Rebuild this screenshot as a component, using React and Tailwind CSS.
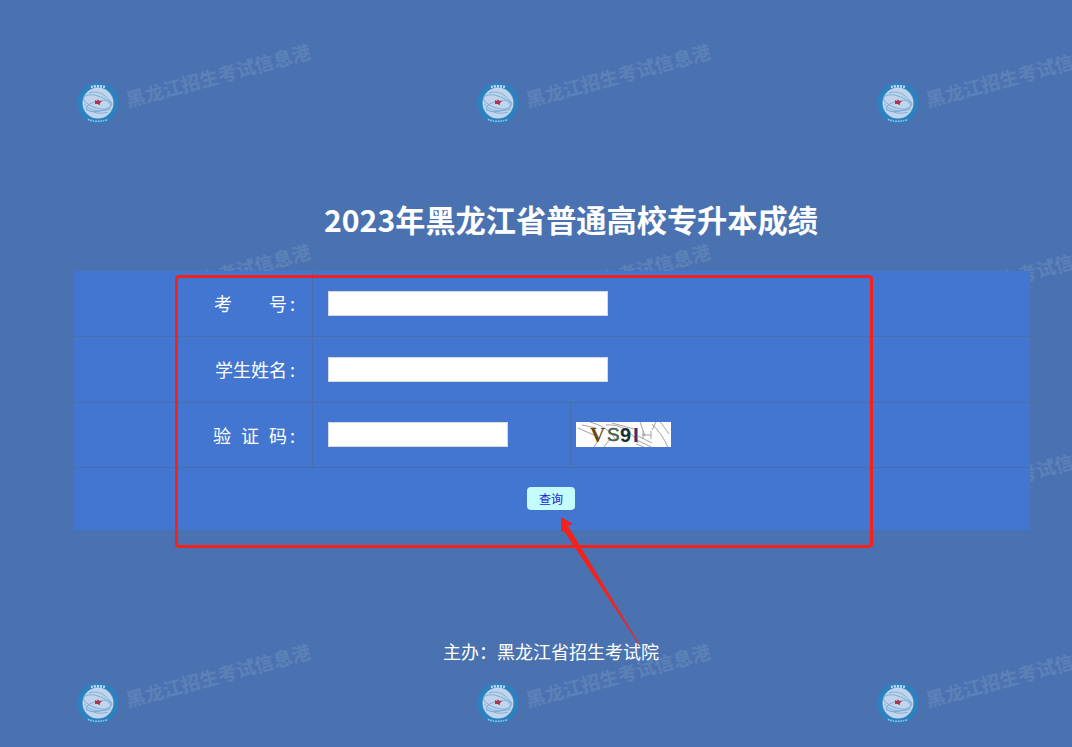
const cjk = "font-['Noto_Sans_CJK_SC','Noto_Sans',sans-serif]";

function Logo() {
  return (
    <svg width="42" height="42" viewBox="0 0 42 42" className="shrink-0">
      <circle cx="21" cy="21" r="20.5" fill="#2c81c0" />
      <circle cx="21" cy="21" r="15.5" fill="#c2d5ec" />
      <g fill="none" stroke="#7fb0dc" strokeWidth="1">
        <ellipse cx="20" cy="20" rx="14" ry="6" transform="rotate(18 20 20)" />
        <ellipse cx="22" cy="24" rx="13" ry="5" transform="rotate(-12 22 24)" />
        <path d="M7 22c5 6 14 9 27 5" />
        <path d="M12 11c8-3 17 1 22 10" />
        <path d="M9 27c6 3 14 6 22 3" />
      </g>
      <path d="M18 18l2 1 1-2 1 2 3 0-2 2 0 2-3-1-2 0z" fill="#b5324f" />
      <path d="M14 5c4-1 10-1 14 0" stroke="#c7dcef" strokeWidth="2.4" strokeDasharray="2 1" fill="none" />
      <path d="M11 37.500c6 2.400 14 2.400 20 0" stroke="#a9cbe6" strokeWidth="1.400" strokeDasharray="1.500 1" fill="none" />
    </svg>
  );
}

function Watermark() {
  const tiles = Array.from({ length: 12 });
  return (
    <div className="absolute inset-0 overflow-hidden">
      <div className="grid grid-cols-[repeat(3,400px)] auto-rows-[200px] w-[1200px]">
        {tiles.map((_, i) => (
          <div key={i} className="flex items-start pl-[77px] pt-[82px]">
            <Logo />
            <span className="ml-[4px] mt-[-21px] w-[190px] whitespace-nowrap text-[19px] leading-[28px] font-bold text-white/10 -rotate-[15deg]">
              黑龙江招生考试信息港
            </span>
          </div>
        ))}
      </div>
    </div>
  );
}

function Captcha() {
  return (
    <svg width="95" height="25" viewBox="0 0 95 25" className="block">
      <rect width="95" height="25" fill="#fdfdfd" />
      <g fill="none" stroke="#8d8d8d" strokeWidth="0.8">
        <path d="M2 6l18 8" />
        <path d="M6 3l14 3" />
        <path d="M14 0c10 3 18 6 26 18" />
        <path d="M30 3c12-1 24 4 32 18" />
        <path d="M36 1l22 6" />
        <path d="M64 0l5 14" />
        <path d="M66 13h9M67 9v8M75 9v8" />
        <path d="M61 18l14 7" />
        <path d="M60 22l8 3" />
        <path d="M76 2c6 6 12 14 16 23" />
        <path d="M84 0c3 3 6 8 9 12" />
        <path d="M80 0l-4 8" />
        <path d="M28 25l6-8" />
        <path d="M18 25l4-6" />
        <path d="M62 14l14 7" />
      </g>
      <text x="14" y="20" fontFamily="Liberation Serif" fontWeight="700" fontSize="21" fill="#6b4a10">V</text>
      <text x="31" y="19" fontFamily="Liberation Sans" fontSize="19" fill="#45604f" stroke="#45604f" strokeWidth="0.5">S</text>
      <text x="44" y="20" fontFamily="Liberation Sans" fontWeight="700" fontSize="20" fill="#1b2f30">9</text>
      <text x="57" y="20" fontFamily="Liberation Sans" fontWeight="700" fontSize="21" fill="#4a2a6a">I</text>
    </svg>
  );
}

function Row({ label, h, children }) {
  return (
    <div className={`flex border-b border-[#4a6fa8] ${h}`}>
      <div className="w-[239px] shrink-0 border-r border-[#4a6fa8] pr-[17px] flex items-center justify-end text-[18px] text-white">
        {label}
      </div>
      {children}
    </div>
  );
}

function TextBox({ w }) {
  return <input type="text" className={`${w} h-[25px] bg-white border border-[#d9d9d9] outline-none`} />;
}

function Colon() {
  return <span className="ml-[3px]">:</span>;
}

export default function App() {
  return (
    <div className={`relative w-full h-[747px] overflow-hidden bg-[#4a72b0] ${cjk}`}>
      <Watermark />

      <div className="relative">
        <h1 className="h-[271px] pl-[324px] pt-[196px] text-[30.200px] leading-[46px] font-bold text-white whitespace-nowrap">
          2023年黑龙江省普通高校专升本成绩
        </h1>

        <div className="ml-[74px] w-[956px] h-[259px] bg-[#4376d0]">
          <Row h="h-[66px]" label={<span>考<span className="ml-[37px]">号</span><Colon /></span>}>
            <div className="flex items-center pl-[15px]">
              <TextBox w="w-[280px]" />
            </div>
          </Row>
          <Row h="h-[66px]" label={<span>学生姓名<Colon /></span>}>
            <div className="flex items-center pl-[15px]">
              <TextBox w="w-[280px]" />
            </div>
          </Row>
          <Row h="h-[65px]" label={<span>验<span className="ml-[10px]">证</span><span className="ml-[10px]">码</span><Colon /></span>}>
            <div className="w-[258px] border-r border-[#4a6fa8] flex items-center pl-[15px] pb-[2px]">
              <TextBox w="w-[180px]" />
            </div>
            <div className="flex items-center pl-[5px] pb-[2px]">
              <Captcha />
            </div>
          </Row>
          <div className="flex justify-center pt-[19px]">
            <button className="mr-[2px] w-[48px] h-[23px] rounded-[4px] bg-[#c4fbfc] text-[12px] leading-[23px] text-[#1a1ae0]">
              查询
            </button>
          </div>
        </div>

        <p className="mt-[108px] ml-[443px] text-[18px] leading-[26px] text-white whitespace-nowrap">
          主办：黑龙江省招生考试院
        </p>
      </div>

      {/* red annotation drawn over the screenshot */}
      <div className="absolute left-[175px] top-[275px] w-[698px] h-[273px] border-[3px] border-[#f5211b] rounded-[4px]" />
      <svg className="absolute inset-0 pointer-events-none" width="1072" height="747" viewBox="0 0 1072 747">
        <path
          d="M561 517L573 524L568 526L640 645L639.500 645.400L564 531L561 532Z"
          fill="#f5211b"
        />
      </svg>
    </div>
  );
}
